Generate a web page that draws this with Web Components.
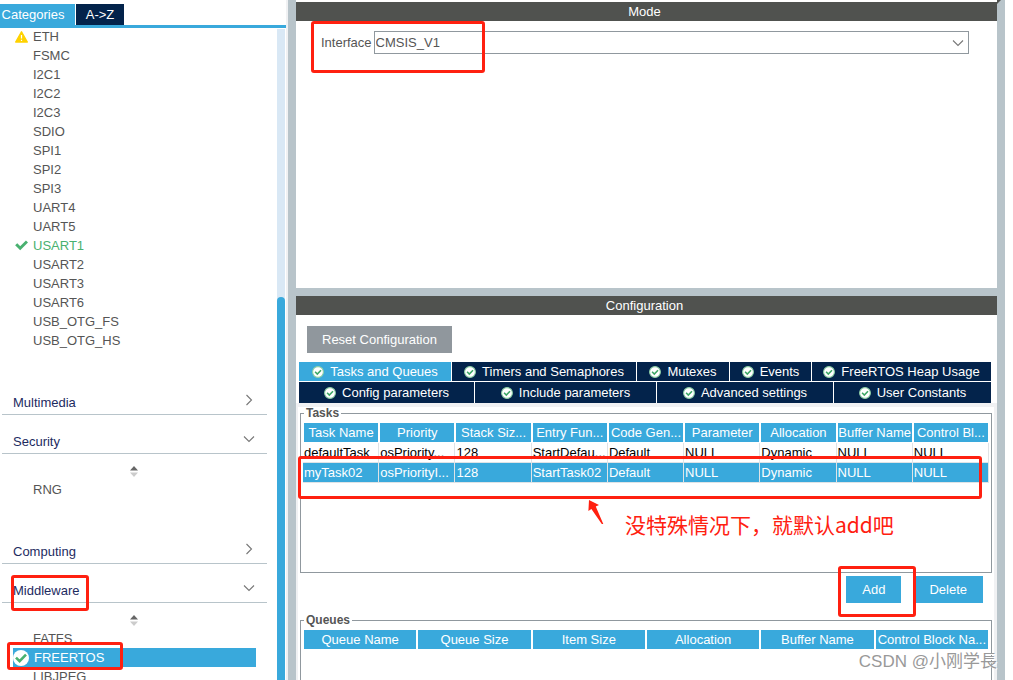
<!DOCTYPE html>
<html lang="en">
<head>
<meta charset="utf-8">
<title>Pinout &amp; Configuration</title>
<style>
  html, body { margin: 0; height: 100%; background: #fff; overflow: hidden; }
  body {
    font: 13px/19px "Liberation Sans", Arial, "Noto Sans CJK SC", sans-serif;
    --sky: #39a9dc; --navy: #03234b; --bar: #50524f; --split: #b8c4ca; --ink: #555; --line: #90989e; --mark: #ff2010;
  }
</style>
</head>
<body>
<config-app></config-app>

<script>
const define = (name, html, setup) => {
  const tpl = document.createElement('template');
  tpl.innerHTML = '<style>*{box-sizing:border-box}button{font:inherit;border:0;margin:0;padding:0;cursor:pointer}</style>' + html;
  customElements.define(name, class extends HTMLElement {
    constructor() {
      super();
      this.attachShadow({ mode: 'open' }).append(tpl.content.cloneNode(true));
    }
    connectedCallback() { if (setup) setup(this, this.shadowRoot); }
  });
};

/* ---------- icons ---------- */
const ICONS = {
  warn: '<svg width="13" height="12" viewBox="0 0 13 12"><path d="M6.5.8 12.3 11H.7Z" fill="#ffd200" stroke="#ffd200" stroke-width="1.4" stroke-linejoin="round"/><path d="M6.5 4v3.6M6.5 8.8v1.2" stroke="#fff" stroke-width="1.2"/></svg>',
  check: '<svg width="13" height="11" viewBox="0 0 13 11"><path d="M1.2 4.2 5.2 8.2 12 1.5" fill="none" stroke="#49b170" stroke-width="3"/></svg>',
  badge: '<svg width="16" height="16" viewBox="0 0 16 16"><circle cx="8" cy="8" r="8" fill="#fff"/><path d="M3 7.6 6.6 11.2 13 4.6" fill="none" stroke="#49b170" stroke-width="2.6"/></svg>',
  ok: '<svg width="12" height="12" viewBox="0 0 12 12"><circle cx="6" cy="6" r="5.4" fill="#fff" stroke="#8ed0a6" stroke-width="1.1"/><path d="M3.1 5.8 5.3 8 9 4.2" fill="none" stroke="#3da766" stroke-width="1.6"/></svg>',
  right: '<svg width="12" height="12" viewBox="0 0 12 12"><path d="M3.5 1 8.5 6l-5 5" fill="none" stroke="#777" stroke-width="1.1"/></svg>',
  down: '<svg width="12" height="12" viewBox="0 0 12 12"><path d="M1 3.5 6 8.5l5-5" fill="none" stroke="#777" stroke-width="1.1"/></svg>',
  sort: '<svg width="8" height="11" viewBox="0 0 8 11"><path d="M4 0 8 4.4H0Z" fill="#666"/><path d="M4 11 8 6.6H0Z" fill="#ccc"/></svg>'
};
define('ui-icon', '<style>:host{display:block;line-height:0}svg{display:block}</style><span></span>',
  (el, root) => { root.querySelector('span').innerHTML = ICONS[el.getAttribute('name')] || ''; });

/* ---------- left panel ---------- */
define('category-item', `
<style>
  :host { display: block; color: var(--ink); }
  button { display: grid; grid-template-columns: 16px 1fr; column-gap: 4px; align-items: center; width: 243px;
    height: 19px; background: none; color: inherit; text-align: left; margin-left: 13px; }
  ui-icon { justify-self: center; }
  :host([enabled]) { color: #49b170; }
  :host([selected]) { color: #fff; }
  :host([selected]) button { background: var(--sky); column-gap: 5px; }
</style>
<button type="button"><i></i><slot></slot></button>`, (el, root) => {
  if (el.hasAttribute('icon') && root.querySelector('i')) {
    const icon = document.createElement('ui-icon');
    icon.setAttribute('name', el.getAttribute('icon'));
    root.querySelector('i').replaceWith(icon);
  }
});

define('category-group', `
<style>
  :host { display: block; }
  button { display: flex; justify-content: space-between; align-items: flex-end; width: 265px; height: 39px; margin-left: 2px;
    padding: 0 12px 2px 11px; background: none; color: #1d2b5f; border-bottom: 1px solid var(--split); }
  ui-icon { padding-bottom: 6px; }
  .sort { display: flex; justify-content: center; width: 267px; height: 26px; padding-top: 12px; }
  .sort ui-icon { padding: 0; }
  .items { padding-bottom: 26px; }
  :host(:not([open])) .sort, :host(:not([open])) .items { display: none; }
</style>
<button type="button"><span></span><ui-icon></ui-icon></button>
<div class="sort"><ui-icon name="sort"></ui-icon></div>
<div class="items"><slot></slot></div>`, (el, root) => {
  root.querySelector('span').textContent = el.getAttribute('label');
  const icon = document.createElement('ui-icon');
  icon.setAttribute('name', el.hasAttribute('open') ? 'down' : 'right');
  root.querySelector('button ui-icon').replaceWith(icon);
});

define('category-panel', `
<style>
  :host { display: flex; flex-direction: column; min-height: 0; padding-top: 4px; overflow: hidden; border-right: 2px solid #f0f1f3; }
  .tabs { display: flex; gap: 1px; height: 24px; border-bottom: 3px solid var(--sky); flex: none; }
  .tabs button { background: var(--navy); color: #fff; width: 48px; }
  .tabs button.on { background: var(--sky); width: 75px; padding-right: 9px; }
  .body { flex: 1; min-height: 0; display: grid; grid-template-columns: 1fr 8px; padding-right: 1px; overflow: hidden; }
  .list { min-height: 0; overflow: hidden; margin-top: -1px; }
  .loose { padding-bottom: 26px; }
  .track { background: #d9e8f5; margin-top: 1px; padding-top: 268px; display: flex; }
  .thumb { flex: 1; background: var(--sky); border-radius: 4px 4px 0 0; }
</style>
<div class="tabs" role="tablist">
  <button class="on" type="button" role="tab" aria-selected="true">Categories</button>
  <button type="button" role="tab">A-&gt;Z</button>
</div>
<div class="body">
  <div class="list">
    <div class="loose">
      <category-item icon="warn">ETH</category-item>
      <category-item>FSMC</category-item>
      <category-item>I2C1</category-item>
      <category-item>I2C2</category-item>
      <category-item>I2C3</category-item>
      <category-item>SDIO</category-item>
      <category-item>SPI1</category-item>
      <category-item>SPI2</category-item>
      <category-item>SPI3</category-item>
      <category-item>UART4</category-item>
      <category-item>UART5</category-item>
      <category-item icon="check" enabled>USART1</category-item>
      <category-item>USART2</category-item>
      <category-item>USART3</category-item>
      <category-item>USART6</category-item>
      <category-item>USB_OTG_FS</category-item>
      <category-item>USB_OTG_HS</category-item>
    </div>
    <category-group label="Multimedia"></category-group>
    <category-group label="Security" open><category-item>RNG</category-item></category-group>
    <category-group label="Computing"></category-group>
    <category-group label="Middleware" open>
      <category-item>FATFS</category-item>
      <category-item icon="badge" selected>FREERTOS</category-item>
      <category-item>LIBJPEG</category-item>
    </category-group>
  </div>
  <div class="track"><div class="thumb"></div></div>
</div>`);

/* ---------- right panel ---------- */
define('title-bar', `
<style>:host { display: block; flex: none; background: var(--bar); color: #fff; text-align: center; height: 19px; padding-right: 4px; }</style>
<slot></slot>`);

define('mode-pane', `
<style>
  :host { display: block; padding-top: 2px; min-height: 0; overflow: hidden; }
  .row { display: flex; align-items: center; gap: 2px; padding: 10px 28px 0 25px; color: var(--ink); }
  .field { flex: 1; display: grid; align-items: center; }
  select { grid-area: 1 / 1; appearance: none; font: inherit; color: inherit; background: #fff; border: 1px solid var(--line);
    border-radius: 0; height: 23px; width: 100%; padding: 0 0 0 1px; margin: 0; }
  ui-icon { grid-area: 1 / 1; justify-self: end; padding-right: 5px; pointer-events: none; }
</style>
<title-bar>Mode</title-bar>
<div class="row">
  <label for="interface">Interface</label>
  <div class="field">
    <select id="interface"><option>CMSIS_V1</option></select>
    <ui-icon name="down"></ui-icon>
  </div>
</div>`);

define('config-tab', `
<style>
  :host { display: block; }
  button { display: flex; align-items: center; justify-content: center; gap: 6px; width: 100%; height: 100%;
    background: var(--navy); color: #fff; white-space: nowrap; }
  :host([active]) button { background: var(--sky); }
</style>
<button type="button" role="tab"><ui-icon name="ok"></ui-icon><span><slot></slot></span></button>`);

define('config-tabs', `
<style>
  :host { display: grid; gap: 1px; padding: 0 6px 0 3px; }
  div { display: grid; gap: 1px; }
  .first { grid-template-columns: 152fr 184fr 92fr 81fr 179fr; height: 19px; }
  .second { grid-template-columns: 175fr 181fr 176fr 157fr; height: 21px; }
</style>
<div class="first" role="tablist">
  <config-tab active>Tasks and Queues</config-tab>
  <config-tab>Timers and Semaphores</config-tab>
  <config-tab>Mutexes</config-tab>
  <config-tab>Events</config-tab>
  <config-tab>FreeRTOS Heap Usage</config-tab>
</div>
<div class="second" role="tablist">
  <config-tab>Config parameters</config-tab>
  <config-tab>Include parameters</config-tab>
  <config-tab>Advanced settings</config-tab>
  <config-tab>User Constants</config-tab>
</div>`);

define('table-group', `
<style>
  :host { display: block; }
  fieldset { margin: 0; border: 1px solid var(--line); padding: 3px 2px 0; min-width: 0; height: 100%; }
  legend { font-weight: bold; font-size: 12px; line-height: 13px; color: var(--ink); padding: 0 2px; margin-left: 1px; }
  table { width: 100%; table-layout: fixed; border-collapse: separate; border-spacing: 0; }
  th, td { padding: 0; font-weight: normal; white-space: nowrap; overflow: hidden; line-height: 19px; height: 20px; }
  th { background: var(--sky); color: #fff; border: solid #fff; border-width: 0 1px 1px; }
  td { border: solid #dfe3e6; border-width: 0 1px 1px 0; text-align: left; padding-left: 1px; color: #000; }
  tbody tr:last-child td { background: var(--sky); color: #fff; }
</style>
<fieldset><legend></legend><table><thead><tr></tr></thead><tbody></tbody></table></fieldset>`, (el, root) => {
  root.querySelector('legend').textContent = el.getAttribute('label');
  const cells = (tr, tag, text) => tr.replaceChildren(...text.split('|').map(t => {
    const c = document.createElement(tag);
    c.textContent = t;
    return c;
  }));
  cells(root.querySelector('thead tr'), 'th', el.getAttribute('columns'));
  const rows = (el.getAttribute('rows') || '').split(';').filter(Boolean);
  root.querySelector('tbody').replaceChildren(...rows.map(r => {
    const tr = document.createElement('tr');
    cells(tr, 'td', r);
    return tr;
  }));
});

define('action-button', `
<style>
  :host { display: block; }
  button { height: 27px; padding: 0 16px; background: var(--sky); color: #fff; display: block; }
  :host([muted]) button { background: #90979d; padding: 0 15px; }
</style>
<button type="button"><slot></slot></button>`);

define('config-pane', `
<style>
  :host { display: flex; flex-direction: column; min-height: 0; overflow: hidden; }
  .reset { display: flex; padding: 11px 11px 9px; }
  .content { flex: 1; min-height: 0; border: solid #f0f1f3; border-width: 4px 3px 0 2px; padding: 0 2px; overflow: hidden; }
  .tasks { height: 166px; }
  .queues { height: 166px; }
  .actions { display: flex; justify-content: flex-end; gap: 12px; padding: 3px 9px 11px; }
</style>
<title-bar>Configuration</title-bar>
<div class="reset"><action-button muted>Reset Configuration</action-button></div>
<config-tabs></config-tabs>
<div class="content">
  <table-group class="tasks" label="Tasks"
    columns="Task Name|Priority|Stack Siz...|Entry Fun...|Code Gen...|Parameter|Allocation|Buffer Name|Control Bl..."
    rows="defaultTask|osPriority...|128|StartDefau...|Default|NULL|Dynamic|NULL|NULL;myTask02|osPriorityI...|128|StartTask02|Default|NULL|Dynamic|NULL|NULL"></table-group>
  <div class="actions"><action-button>Add</action-button><action-button>Delete</action-button></div>
  <table-group class="queues" label="Queues"
    columns="Queue Name|Queue Size|Item Size|Allocation|Buffer Name|Control Block Na..."></table-group>
</div>`);

/* ---------- annotations drawn over the window ---------- */
define('note-layer', `
<style>
  :host { position: absolute; inset: 0; pointer-events: none; overflow: hidden; }
  .box { position: absolute; border: 3px solid var(--mark); border-radius: 3px; }
  .interface { left: 311px; top: 21px; width: 174px; height: 52px; }
  .middleware { left: 11px; top: 575px; width: 78px; height: 36px; }
  .freertos { left: 7px; top: 642px; width: 116px; height: 28px; }
  .task { left: 298px; right: 31px; top: 456px; height: 43px; }
  .add { right: 97px; top: 566px; width: 78px; height: 51px; }
  svg { position: absolute; left: 588px; top: 500px; }
  p { position: absolute; margin: 0; white-space: nowrap; }
  .note { left: 625px; top: 509px; font: 21px/30px "Noto Sans CJK SC", sans-serif; color: var(--mark); }
  .credit { right: 16px; top: 650px; font: 17px/24px "Liberation Sans", "Noto Sans CJK SC", sans-serif; color: #999; text-shadow: 1px 1px 0 #fff; }
</style>
<div class="box interface"></div>
<div class="box middleware"></div>
<div class="box freertos"></div>
<div class="box task"></div>
<div class="box add"></div>
<svg width="16" height="25" viewBox="0 0 16 25"><path d="M1 0 11 5 7.8 6.6 15.3 24 13.8 24 3.4 9 .4 11Z" fill="#ff2010"/></svg>
<p class="note">没特殊情况下，就默认add吧</p>
<p class="credit">CSDN @小刚学長</p>`);

define('config-app', `
<style>
  :host { position: relative; display: grid; grid-template-columns: 288px minmax(0, 1fr) 8px; height: 100vh; overflow: hidden; }
  main { display: grid; grid-template-rows: 288px 8px minmax(0, 1fr); min-height: 0; border: solid var(--split); border-width: 0 8px; }
  .split { background: var(--split); }
  .corner { position: absolute; right: 12px; top: 0; }
</style>
<category-panel></category-panel>
<main>
  <mode-pane></mode-pane>
  <div class="split"></div>
  <config-pane></config-pane>
</main>
<svg class="corner" width="4" height="4" viewBox="0 0 4 4"><path d="M0 0h4L0 4Z" fill="#50524f"/></svg>
<note-layer></note-layer>`);
</script>
</body>
</html>
